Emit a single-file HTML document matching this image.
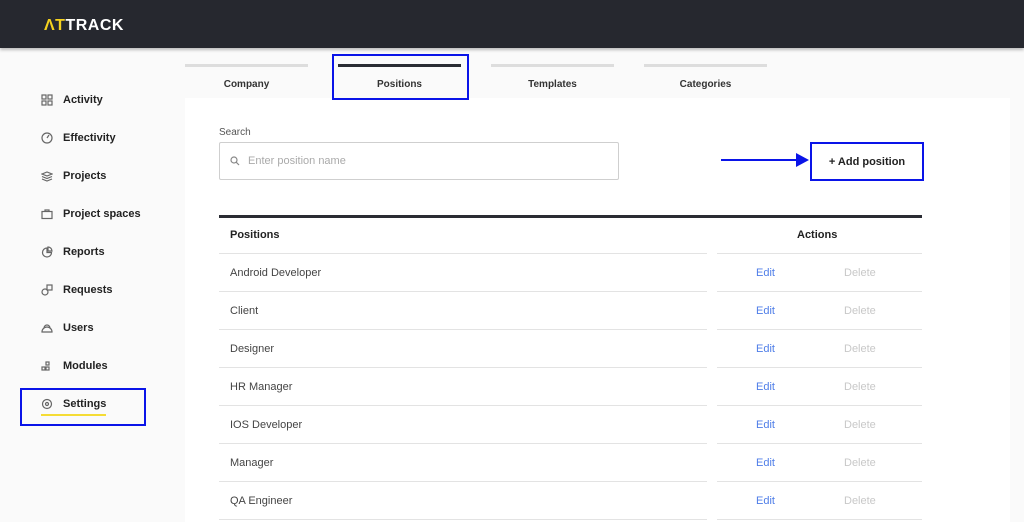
<!DOCTYPE html><html><head><style>
*{margin:0;padding:0;box-sizing:border-box}
body{width:1024px;height:522px;overflow:hidden;background:#fafafa;font-family:"Liberation Sans",sans-serif;position:relative}
.top{position:absolute;left:0;top:0;width:1024px;height:48px;background:#26282f;box-shadow:0 2px 3px rgba(0,0,0,.25)}
.logo{position:absolute;left:44px;top:17px;font-weight:bold;font-size:16px;color:#fff;letter-spacing:.5px}
.logo b{color:#f5d21f}
.nav{position:absolute;left:41px;font-size:11px;font-weight:bold;color:#222;display:flex;align-items:center;margin-top:1px}
.nav svg{width:12px;height:12px;margin-right:10px;stroke:#666;fill:none;stroke-width:1.2}
.content{position:absolute;left:185px;top:98px;width:825px;height:424px;background:#fff}
.tab{position:absolute;top:64px;width:123px;border-top:3px solid #ddd;text-align:center;font-size:10px;font-weight:bold;color:#333;padding-top:12px}
.box{position:absolute;border:2px solid #0a14e8}
.row{position:absolute;left:219px;width:703px;height:38px;font-size:11px;color:#444}
.row .n{position:absolute;left:11px;top:13px}
.row .e{position:absolute;left:537px;top:13px;color:#4f7ee8}
.row .d{position:absolute;left:625px;top:13px;color:#c8c8c8}
.l1{position:absolute;left:0;bottom:0;width:488px;border-bottom:1px solid #e3e3e3}
.l2{position:absolute;left:498px;bottom:0;width:205px;border-bottom:1px solid #e3e3e3}
</style></head><body>
<div class="top"><div class="logo"><b>ΛT</b>TRACK</div></div>
<div class="nav" style="top:93px"><svg viewBox="0 0 12 12"><rect x="1" y="1" width="4" height="4"/><rect x="7" y="1" width="4" height="4"/><rect x="1" y="7" width="4" height="4"/><rect x="7" y="7" width="4" height="4"/></svg>Activity</div>
<div class="nav" style="top:131px"><svg viewBox="0 0 12 12"><circle cx="6" cy="6" r="5"/><path d="M6 6l2-3"/></svg>Effectivity</div>
<div class="nav" style="top:169px"><svg viewBox="0 0 12 12"><path d="M1 4l5-2 5 2-5 2z M1 6.5l5 2 5-2 M1 9l5 2 5-2"/></svg>Projects</div>
<div class="nav" style="top:207px"><svg viewBox="0 0 12 12"><rect x="1" y="3.5" width="10" height="7"/><path d="M4 3.5V2h4v1.5"/></svg>Project spaces</div>
<div class="nav" style="top:245px"><svg viewBox="0 0 12 12"><path d="M6 2a4.5 4.5 0 1 0 4.5 4.5H6z M7 1v4h4A4 4 0 0 0 7 1z"/></svg>Reports</div>
<div class="nav" style="top:283px"><svg viewBox="0 0 12 12"><circle cx="4" cy="8" r="3"/><rect x="6" y="1" width="5" height="5"/></svg>Requests</div>
<div class="nav" style="top:321px"><svg viewBox="0 0 12 12"><path d="M1 10a5 5 0 0 1 10 0z M3 6a3 3 0 0 1 6 0"/></svg>Users</div>
<div class="nav" style="top:359px"><svg viewBox="0 0 12 12"><rect x="1" y="7" width="3" height="3"/><rect x="5" y="7" width="3" height="3"/><rect x="5" y="2" width="3" height="3"/></svg>Modules</div>
<div class="nav" style="top:397px"><svg viewBox="0 0 12 12"><circle cx="6" cy="6" r="4.5"/><circle cx="6" cy="6" r="1.5"/></svg>Settings</div>
<div style="position:absolute;left:41px;top:414px;width:65px;height:2px;background:#f5dc35"></div>
<div class="box" style="left:20px;top:388px;width:126px;height:38px"></div>
<div class="content"></div>
<div class="tab" style="left:185px">Company</div>
<div class="tab" style="left:338px;border-top-color:#2a2c33">Positions</div>
<div class="tab" style="left:491px">Templates</div>
<div class="tab" style="left:644px">Categories</div>
<div class="box" style="left:332px;top:54px;width:137px;height:46px"></div>
<div style="position:absolute;left:219px;top:127px;font-size:10px;color:#555">Search</div>
<div style="position:absolute;left:219px;top:142px;width:400px;height:38px;border:1px solid #cfcfcf;border-radius:2px;font-size:11px;color:#aaa;padding:12px 0 0 28px">Enter position name
<svg style="position:absolute;left:10px;top:13px" width="10" height="10" viewBox="0 0 10 10" fill="none" stroke="#888" stroke-width="1.2"><circle cx="4" cy="4" r="3"/><path d="M6.2 6.2L9 9"/></svg></div>
<div style="position:absolute;left:721px;top:159px;width:78px;height:2px;background:#0a14e8"></div>
<div style="position:absolute;left:796px;top:153px;width:0;height:0;border-left:13px solid #0a14e8;border-top:7px solid transparent;border-bottom:7px solid transparent"></div>
<div class="box" style="left:810px;top:142px;width:114px;height:39px;font-size:11px;font-weight:bold;color:#222;text-align:center;line-height:37px">+ Add position</div>
<div style="position:absolute;left:219px;top:215px;width:703px;height:3px;background:#2a2c33"></div>
<div class="row" style="top:216px;font-weight:bold;color:#222"><span class="n" style="top:13px">Positions</span><span style="position:absolute;left:578px;top:13px">Actions</span><div class="l1"></div><div class="l2"></div></div>
<div class="row" style="top:254px"><span class="n">Android Developer</span><span class="e">Edit</span><span class="d">Delete</span><div class="l1"></div><div class="l2"></div></div>
<div class="row" style="top:292px"><span class="n">Client</span><span class="e">Edit</span><span class="d">Delete</span><div class="l1"></div><div class="l2"></div></div>
<div class="row" style="top:330px"><span class="n">Designer</span><span class="e">Edit</span><span class="d">Delete</span><div class="l1"></div><div class="l2"></div></div>
<div class="row" style="top:368px"><span class="n">HR Manager</span><span class="e">Edit</span><span class="d">Delete</span><div class="l1"></div><div class="l2"></div></div>
<div class="row" style="top:406px"><span class="n">IOS Developer</span><span class="e">Edit</span><span class="d">Delete</span><div class="l1"></div><div class="l2"></div></div>
<div class="row" style="top:444px"><span class="n">Manager</span><span class="e">Edit</span><span class="d">Delete</span><div class="l1"></div><div class="l2"></div></div>
<div class="row" style="top:482px"><span class="n">QA Engineer</span><span class="e">Edit</span><span class="d">Delete</span><div class="l1"></div><div class="l2"></div></div>
</body></html>
